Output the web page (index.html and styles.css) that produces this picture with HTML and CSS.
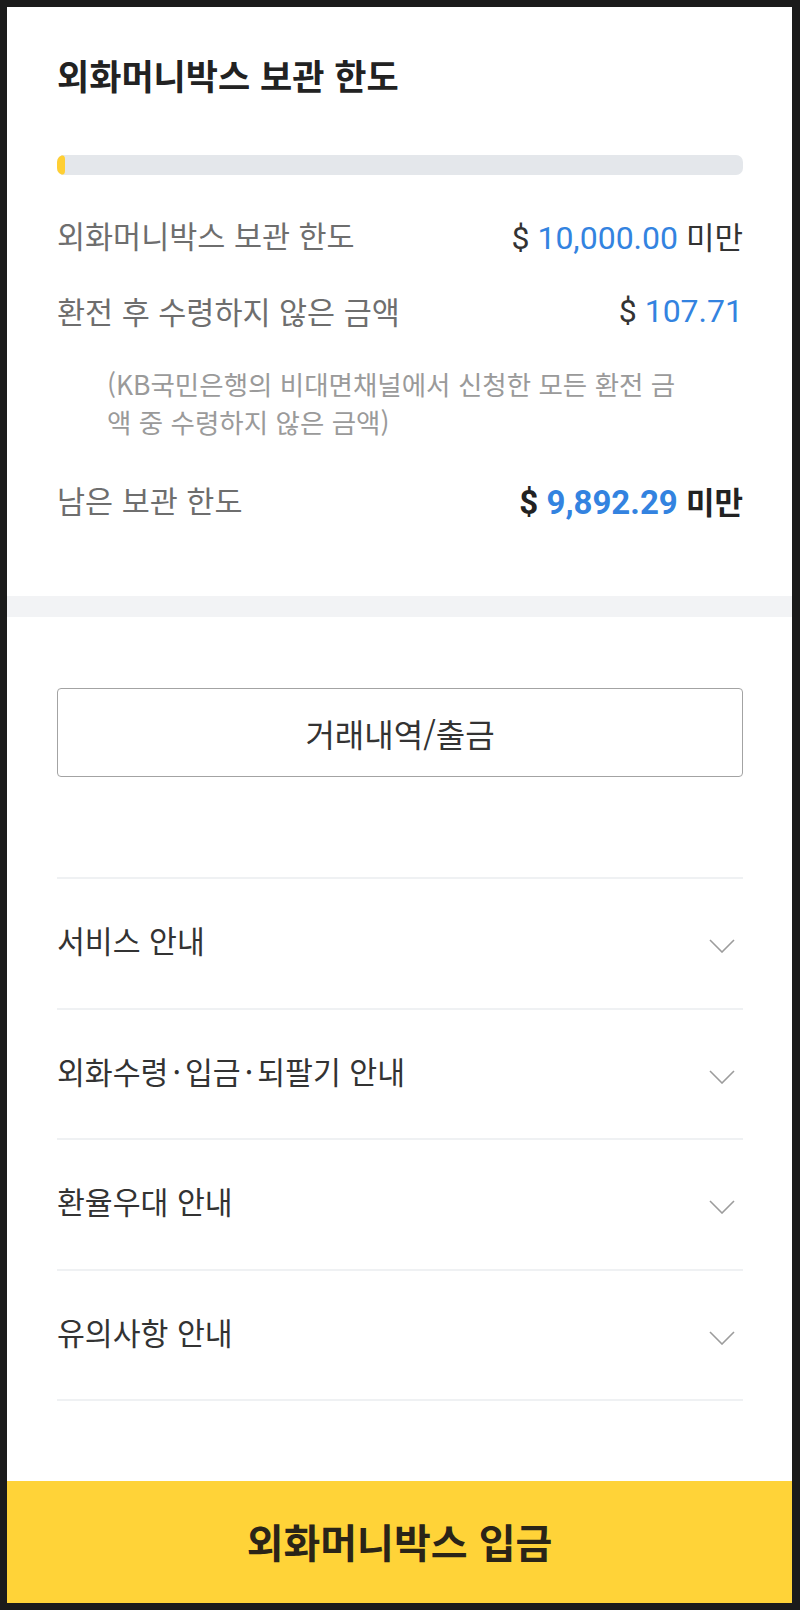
FILE: index.html
```html
<!DOCTYPE html>
<html lang="ko">
<head>
<meta charset="utf-8">
<title>외화머니박스 보관 한도</title>
<link rel="stylesheet" href="styles.css">
</head>
<body>
<div class="screen">
  <section class="limit">
    <h1 class="title">외화머니박스 보관 한도</h1>
    <div class="bar"><div class="bar-fill" style="width: 1.1%"></div></div>
    <div class="rows">
      <div class="row">
        <span class="label">외화머니박스 보관 한도</span>
        <span class="value"><span class="cur">$</span> <span class="num">10,000.00</span> <span class="unit">미만</span></span>
      </div>
      <div class="row">
        <span class="label">환전 후 수령하지 않은 금액</span>
        <span class="value"><span class="cur">$</span> <span class="num">107.71</span></span>
      </div>
      <p class="note">(KB국민은행의 비대면채널에서 신청한 모든 환전 금<br>액 중 수령하지 않은 금액)</p>
      <div class="row">
        <span class="label">남은 보관 한도</span>
        <span class="value strong"><span class="cur">$</span> <span class="num">9,892.29</span> <span class="unit">미만</span></span>
      </div>
    </div>
  </section>
  <div class="gap-band"></div>
  <section class="menu">
    <button class="outline-btn" type="button">거래내역/출금</button>
    <ul class="accordion">
      <li class="acc-item"><span>서비스 안내</span><svg class="chev" width="26" height="14" viewBox="0 0 26 14"><polyline points="1,1 13,13 25,1" fill="none" stroke="#9c9c9c" stroke-width="1.6"/></svg></li>
      <li class="acc-item"><span>외화수령<span class="dot">·</span>입금<span class="dot">·</span>되팔기 안내</span><svg class="chev" width="26" height="14" viewBox="0 0 26 14"><polyline points="1,1 13,13 25,1" fill="none" stroke="#9c9c9c" stroke-width="1.6"/></svg></li>
      <li class="acc-item"><span>환율우대 안내</span><svg class="chev" width="26" height="14" viewBox="0 0 26 14"><polyline points="1,1 13,13 25,1" fill="none" stroke="#9c9c9c" stroke-width="1.6"/></svg></li>
      <li class="acc-item"><span>유의사항 안내</span><svg class="chev" width="26" height="14" viewBox="0 0 26 14"><polyline points="1,1 13,13 25,1" fill="none" stroke="#9c9c9c" stroke-width="1.6"/></svg></li>
    </ul>
  </section>
  <button class="deposit" type="button">외화머니박스 입금</button>
</div>
</body>
</html>
```

FILE: styles.css
```css
* { box-sizing: border-box; }

html, body {
  margin: 0;
  padding: 0;
  background: #1b1b1b;
}

body {
  font-family: Roboto, "Noto Sans CJK KR", "Noto Sans", sans-serif;
  color: #333;
}

.screen {
  margin: 7px;
  width: 785px;
  height: 1596px;
  background: #fff;
  display: flex;
  flex-direction: column;
}

.limit {
  padding: 46px 49px 74px 50px;
}

.title {
  margin: 0;
  font-family: "Noto Sans CJK KR", sans-serif;
  font-size: 35px;
  line-height: 44px;
  font-weight: 700;
  color: #222;
}

.bar {
  margin-top: 58px;
  height: 20px;
  border-radius: 7px;
  background: #e4e7eb;
  overflow: hidden;
}

.bar-fill {
  height: 100%;
  background: #ffcf33;
  border-radius: 7px;
}

.rows {
  margin-top: 38px;
  display: flex;
  flex-direction: column;
  gap: 32px;
}

.row {
  display: flex;
  justify-content: space-between;
  align-items: center;
  height: 44px;
}

.label {
  font-family: "Noto Sans CJK KR", sans-serif;
  font-size: 30.5px;
  color: #6e6e6e;
}

.value {
  font-size: 32px;
  color: #333;
  white-space: nowrap;
}

.value .unit {
  font-family: "Noto Sans CJK KR", sans-serif;
  font-size: 31px;
}

.value .num {
  color: #3383e0;
}

.value.strong {
  font-size: 33px;
  font-weight: 700;
}

.value.strong .cur,
.value.strong .unit {
  color: #222;
}

.note {
  margin: 0 0 5px 0;
  padding-left: 50px;
  font-family: "Noto Sans CJK KR", sans-serif;
  font-size: 26.5px;
  line-height: 38px;
  color: #9a9a9a;
  white-space: nowrap;
}

.gap-band {
  height: 21px;
  background: #f2f3f5;
}

.menu {
  padding: 71px 49px 0 50px;
}

.outline-btn {
  display: block;
  width: 100%;
  height: 89px;
  border: 1.5px solid #a3a3a3;
  border-radius: 4px;
  background: #fff;
  font-family: "Noto Sans CJK KR", sans-serif;
  font-size: 32px;
  color: #333;
  cursor: pointer;
}

.accordion {
  list-style: none;
  margin: 100px 0 0 0;
  padding: 0;
  border-bottom: 2px solid #eff1f3;
}

.acc-item {
  height: 130.5px;
  padding-bottom: 6px;
  border-top: 2px solid #eff1f3;
  display: flex;
  align-items: center;
  justify-content: space-between;
  font-family: "Noto Sans CJK KR", sans-serif;
  font-size: 30.3px;
  color: #333;
}

.dot {
  padding: 0 4px;
}

.chev {
  margin-right: 8px;
  margin-top: 12px;
}

.deposit {
  margin-top: auto;
  height: 122px;
  padding-bottom: 4px;
  width: 100%;
  border: 0;
  background: #ffd338;
  font-family: "Noto Sans CJK KR", sans-serif;
  font-size: 40px;
  font-weight: 700;
  color: #2a2418;
  cursor: pointer;
}
```
